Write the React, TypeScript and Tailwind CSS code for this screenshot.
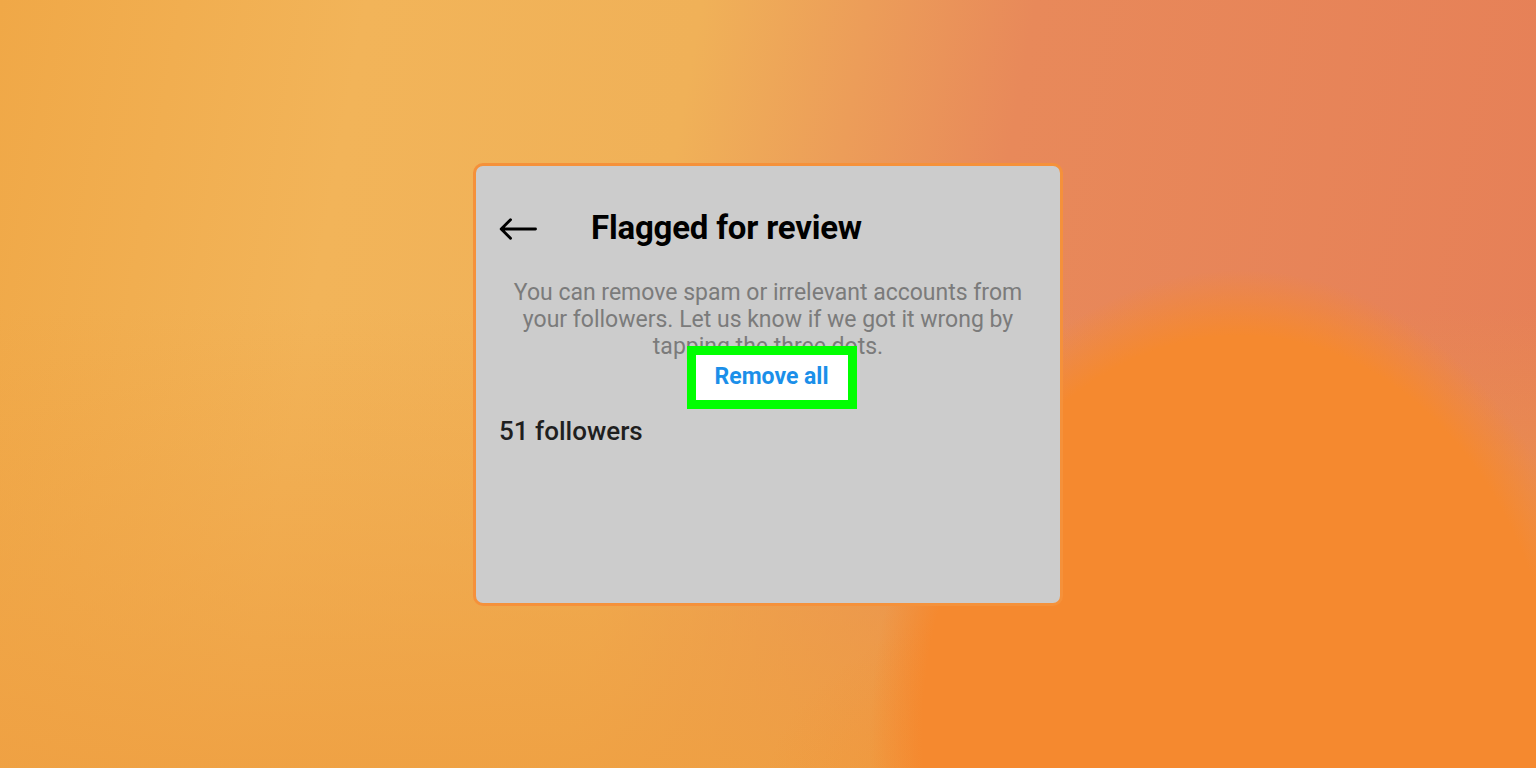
import React from "react";

const BackArrow = () => (
  <svg width="38" height="22" viewBox="0 0 38 22" fill="none" className="shrink-0">
    <path d="M36.5 11H2.5M11.5 1.8L2.2 11l9.3 9.2" stroke="#000" strokeWidth="2.9" strokeLinecap="round" strokeLinejoin="round" />
  </svg>
);

export default function App() {
  return (
    <div
      className="relative w-full h-screen overflow-hidden flex items-center justify-center bg-[linear-gradient(100deg,#f0a847_0%,#f2b459_22%,#f0b158_42%,#e8895a_62%,#e67f57_100%)]"
      style={{ fontFamily: "Roboto, 'Noto Sans', sans-serif" }}
    >
      {/* lower left warm wash */}
      <div className="absolute inset-0 bg-[linear-gradient(180deg,rgba(238,160,68,0)_40%,rgba(239,160,66,0.9)_100%)]" />
      {/* bright orange mound on the right */}
      <div className="absolute inset-0 bg-[radial-gradient(ellipse_370px_470px_at_1240px_740px,#f5892f_0%,#f5892f_86%,rgba(245,137,47,0)_100%)]" />
      <div className="absolute inset-0 bg-[radial-gradient(ellipse_560px_260px_at_1320px_800px,#f5892f_0%,rgba(245,137,47,0)_100%)]" />

      <div className="relative w-[590px] h-[443px] rounded-[10px] border-[3px] border-[#f5913a] bg-[#cccccc] px-[23px] pt-[43px]">
        <div className="flex items-center h-[40px]">
          <BackArrow />
          <h1 className="ml-[54px] -mt-[2px] text-[33px] font-bold text-black tracking-[-0.2px]">Flagged for review</h1>
        </div>

        <p className="mt-[30px] mx-auto w-[530px] text-center text-[23px] leading-[27px] text-[#7b7b7b]">
          You can remove spam or irrelevant accounts from your followers. Let us know if we got it wrong by tapping the three dots.
        </p>

        <div className="relative flex justify-center -mt-[14px]">
          <button className="ml-[7px] w-[170px] h-[63px] border-[9px] border-[#00ff00] bg-white text-[#1b8fe9] text-[23px] font-bold flex items-center justify-center">
            Remove all
          </button>
        </div>

        <div className="mt-[7px] text-[26px] leading-[30px] font-medium text-[#1f1f1f]">51 followers</div>
      </div>
    </div>
  );
}
